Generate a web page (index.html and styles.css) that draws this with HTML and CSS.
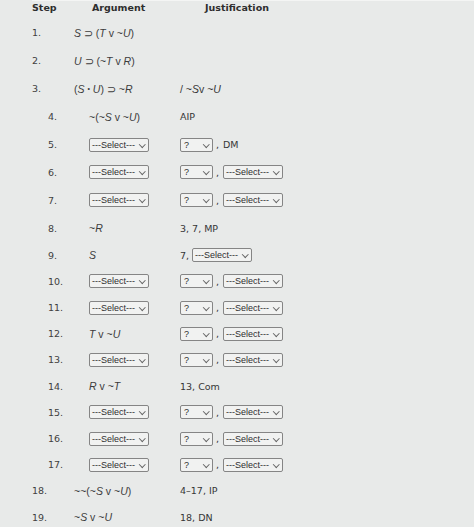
FILE: index.html
```html
<!DOCTYPE html>
<html>
<head>
<meta charset="utf-8">
<link rel="stylesheet" href="styles.css">
</head>
<body>
<div class="proof">
  <div class="head">
    <span class="h-step">Step</span>
    <span class="h-arg">Argument</span>
    <span class="h-just">Justification</span>
  </div>

  <div class="row"><span class="num">1.</span><span class="arg"><i>S</i> ⊃ (<i>T</i> v ~<i>U</i>)</span><span class="just"></span></div>
  <div class="row"><span class="num">2.</span><span class="arg"><i>U</i> ⊃ (~<i>T</i> v <i>R</i>)</span><span class="just"></span></div>
  <div class="row"><span class="num">3.</span><span class="arg">(<i>S</i> <span class="dot">•</span> <i>U</i>) ⊃ ~<i>R</i></span><span class="just formula">/ ~<i>S</i> v ~<i>U</i></span></div>

  <div class="row sub"><span class="num">4.</span><span class="arg">~(~<i>S</i> v ~<i>U</i>)</span><span class="just">AIP</span></div>
  <div class="row sub"><span class="num">5.</span><span class="arg"><span class="sel wide">---Select---<b class="chev"></b></span></span><span class="just"><span class="sel q">?<b class="chev"></b></span><span class="sep">,</span>DM</span></div>
  <div class="row sub"><span class="num">6.</span><span class="arg"><span class="sel wide">---Select---<b class="chev"></b></span></span><span class="just"><span class="sel q">?<b class="chev"></b></span><span class="sep">,</span><span class="sel wide">---Select---<b class="chev"></b></span></span></div>
  <div class="row sub"><span class="num">7.</span><span class="arg"><span class="sel wide">---Select---<b class="chev"></b></span></span><span class="just"><span class="sel q">?<b class="chev"></b></span><span class="sep">,</span><span class="sel wide">---Select---<b class="chev"></b></span></span></div>
  <div class="row sub"><span class="num">8.</span><span class="arg">~<i>R</i></span><span class="just">3, 7, MP</span></div>
  <div class="row sub tight"><span class="num">9.</span><span class="arg"><i>S</i></span><span class="just">7,&nbsp;<span class="sel wide">---Select---<b class="chev"></b></span></span></div>
  <div class="row sub tight"><span class="num">10.</span><span class="arg"><span class="sel wide">---Select---<b class="chev"></b></span></span><span class="just"><span class="sel q">?<b class="chev"></b></span><span class="sep">,</span><span class="sel wide">---Select---<b class="chev"></b></span></span></div>
  <div class="row sub tight"><span class="num">11.</span><span class="arg"><span class="sel wide">---Select---<b class="chev"></b></span></span><span class="just"><span class="sel q">?<b class="chev"></b></span><span class="sep">,</span><span class="sel wide">---Select---<b class="chev"></b></span></span></div>
  <div class="row sub tight"><span class="num">12.</span><span class="arg"><i>T</i> v ~<i>U</i></span><span class="just"><span class="sel q">?<b class="chev"></b></span><span class="sep">,</span><span class="sel wide">---Select---<b class="chev"></b></span></span></div>
  <div class="row sub tight"><span class="num">13.</span><span class="arg"><span class="sel wide">---Select---<b class="chev"></b></span></span><span class="just"><span class="sel q">?<b class="chev"></b></span><span class="sep">,</span><span class="sel wide">---Select---<b class="chev"></b></span></span></div>
  <div class="row sub tight"><span class="num">14.</span><span class="arg"><i>R</i> v ~<i>T</i></span><span class="just">13, Com</span></div>
  <div class="row sub tight"><span class="num">15.</span><span class="arg"><span class="sel wide">---Select---<b class="chev"></b></span></span><span class="just"><span class="sel q">?<b class="chev"></b></span><span class="sep">,</span><span class="sel wide">---Select---<b class="chev"></b></span></span></div>
  <div class="row sub tight"><span class="num">16.</span><span class="arg"><span class="sel wide">---Select---<b class="chev"></b></span></span><span class="just"><span class="sel q">?<b class="chev"></b></span><span class="sep">,</span><span class="sel wide">---Select---<b class="chev"></b></span></span></div>
  <div class="row sub tight"><span class="num">17.</span><span class="arg"><span class="sel wide">---Select---<b class="chev"></b></span></span><span class="just"><span class="sel q">?<b class="chev"></b></span><span class="sep">,</span><span class="sel wide">---Select---<b class="chev"></b></span></span></div>

  <div class="row tight"><span class="num">18.</span><span class="arg">~~(~<i>S</i> v ~<i>U</i>)</span><span class="just">4–17, IP</span></div>
  <div class="row tight"><span class="num">19.</span><span class="arg">~<i>S</i> v ~<i>U</i></span><span class="just">18, DN</span></div>
</div>
</body>
</html>
```
FILE: styles.css
```css
html, body {
  margin: 0;
  padding: 0;
  background: #e8eae9;
}
body {
  width: 474px;
  height: 527px;
  overflow: hidden;
  font-family: "DejaVu Sans", Verdana, sans-serif;
  color: #363636;
}
.proof {
  padding-left: 32px;
}
.head {
  display: grid;
  grid-template-columns: 60px 113px 1fr;
  height: 19px;
  align-items: start;
  font-weight: bold;
  font-size: 9.5px;
  color: #2e2e2e;
  border-top: 1px solid #f4f5f4;
  box-sizing: border-box;
  padding-top: 1px;
}
.row {
  display: grid;
  grid-template-columns: 42px 106px 1fr;
  height: 27.9px;
  align-items: center;
  font-size: 9.5px;
}
.row.tight { height: 26.2px; }
.row.sub {
  grid-template-columns: 57px 91px 1fr;
}
.row.sub .num { padding-left: 16px; }
.num { color: #404040; }
.arg {
  font-family: "Liberation Sans", Arial, sans-serif;
  font-size: 10.5px;
  color: #3c3c3c;
}
.arg i, .formula i { font-style: italic; }
.formula {
  font-family: "Liberation Sans", Arial, sans-serif;
  font-size: 10.5px;
}
.dot { font-size: 7px; vertical-align: 2px; }
.just {
  display: flex;
  align-items: center;
}
.sep { margin: 0 4px 0 3px; }
.sel {
  position: relative;
  display: inline-flex;
  align-items: center;
  box-sizing: border-box;
  height: 14px;
  border: 1px solid #858585;
  border-radius: 2px;
  background: #f1f2f1;
  font-family: "Liberation Sans", Arial, sans-serif;
  font-size: 9px;
  font-style: normal;
  color: #2e2e2e;
  padding-left: 2px;
}
.sel.wide { width: 60px; }
.sel.q { width: 33px; padding-left: 3px; }
.chev {
  position: absolute;
  right: 4px;
  top: 3px;
  width: 3.5px;
  height: 3.5px;
  border-right: 1px solid #666;
  border-bottom: 1px solid #666;
  transform: rotate(45deg);
}
```
